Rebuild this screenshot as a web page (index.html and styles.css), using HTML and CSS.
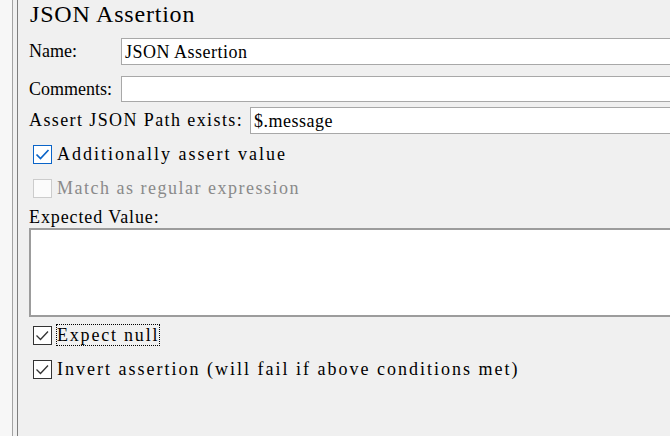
FILE: index.html
```html
<!DOCTYPE html>
<html>
<head>
<meta charset="utf-8">
<link rel="stylesheet" href="styles.css">
</head>
<body>
<div class="gutter"></div>
<div class="frame">
  <div class="panel">
    <div class="title">JSON Assertion</div>
    <div class="row row-name">
      <span class="label">Name:</span>
      <div class="field"><span class="value">JSON Assertion</span></div>
    </div>
    <div class="row row-comments">
      <span class="label">Comments:</span>
      <div class="field short"></div>
    </div>
    <div class="row row-path">
      <span class="label path-label">Assert JSON Path exists:</span>
      <div class="field"><span class="value">$.message</span></div>
    </div>
    <div class="check-row first">
      <span class="box box-blue">
        <svg viewBox="0 0 19 19" width="19" height="19"><polyline points="3.5,9.5 7.5,13.5 15.5,5" fill="none" stroke="#0a64c8" stroke-width="1.7"/></svg>
      </span>
      <span class="check-text">Additionally assert value</span>
    </div>
    <div class="check-row">
      <span class="box box-disabled"></span>
      <span class="check-text disabled">Match as regular expression</span>
    </div>
    <div class="expected-label">Expected Value:</div>
    <div class="textarea"></div>
    <div class="check-row after-area">
      <span class="box box-gray">
        <svg viewBox="0 0 19 19" width="19" height="19"><polyline points="3.5,9.5 7.5,13.5 15,5.5" fill="none" stroke="#333" stroke-width="1.3"/></svg>
      </span>
      <span class="check-text focused">Expect null</span>
    </div>
    <div class="check-row">
      <span class="box box-gray">
        <svg viewBox="0 0 19 19" width="19" height="19"><polyline points="3.5,9.5 7.5,13.5 15,5.5" fill="none" stroke="#333" stroke-width="1.3"/></svg>
      </span>
      <span class="check-text">Invert assertion (will fail if above conditions met)</span>
    </div>
  </div>
</div>
</body>
</html>
```

FILE: styles.css
```css
html, body {
  margin: 0;
  padding: 0;
  height: 100%;
  overflow: hidden;
}
body {
  display: flex;
  background: #f7f7f7;
  font-family: "Liberation Serif", "DejaVu Serif", serif;
  font-size: 18px;
  color: #000;
}
.gutter {
  width: 12px;
  flex: none;
}
.frame {
  flex: none;
  border-left: 1px solid #a3a3a3;
  padding-left: 4px;
  background: #f0f0f0;
  display: flex;
}
.panel {
  border-left: 1px solid #7e7e7e;
  width: 700px;
  padding-left: 11px;
  display: flex;
  flex-direction: column;
  background: #f0f0f0;
}
.title {
  height: 30px;
  line-height: 28px;
  font-size: 24px;
  letter-spacing: 0.8px;
  padding-left: 1px;
}
.row {
  display: flex;
  align-items: center;
}
.row-name { margin-top: 8px; height: 27px; }
.row-comments { margin-top: 11px; height: 26px; }
.row-path { margin-top: 5px; height: 27px; }
.label {
  width: 92px;
  flex: none;
  white-space: nowrap;
  letter-spacing: 0;
}
.path-label {
  width: 221px;
  letter-spacing: 1.4px;
}
.field {
  flex: 1;
  height: 100%;
  box-sizing: border-box;
  border: 1px solid #a8a8a8;
  background: #fff;
  display: flex;
  align-items: center;
  padding-left: 3px;
}
.value {
  line-height: 1;
  letter-spacing: 0.5px;
}
.check-row {
  display: flex;
  align-items: center;
  height: 34px;
  padding-left: 4px;
}
.check-row.first { margin-top: 3px; }
.check-row.after-area { margin-top: 1px; }
.box {
  width: 19px;
  height: 19px;
  box-sizing: border-box;
  flex: none;
  margin-right: 5px;
  position: relative;
  background: #fff;
}
.box svg {
  position: absolute;
  left: -1px;
  top: -1px;
}
.box-blue { border: 1px solid #0a64c8; }
.box-gray { border: 1px solid #333; }
.box-disabled { border: 1px solid #cccccc; background: #fbfbfb; }
.check-text {
  white-space: nowrap;
  letter-spacing: 2px;
}
.check-text.disabled { color: #8a8a8a; letter-spacing: 1.5px; }
.check-text.focused {
  outline: 1px dotted #000;
  outline-offset: 0;
  line-height: 20px;
  letter-spacing: 1.8px;
}
.expected-label {
  height: 20px;
  line-height: 20px;
  margin-top: 2px;
  letter-spacing: 0.9px;
}
.textarea {
  margin-top: 1px;
  height: 89px;
  box-sizing: border-box;
  border: 2px solid #9c9c9c;
  background: #fff;
}
```
